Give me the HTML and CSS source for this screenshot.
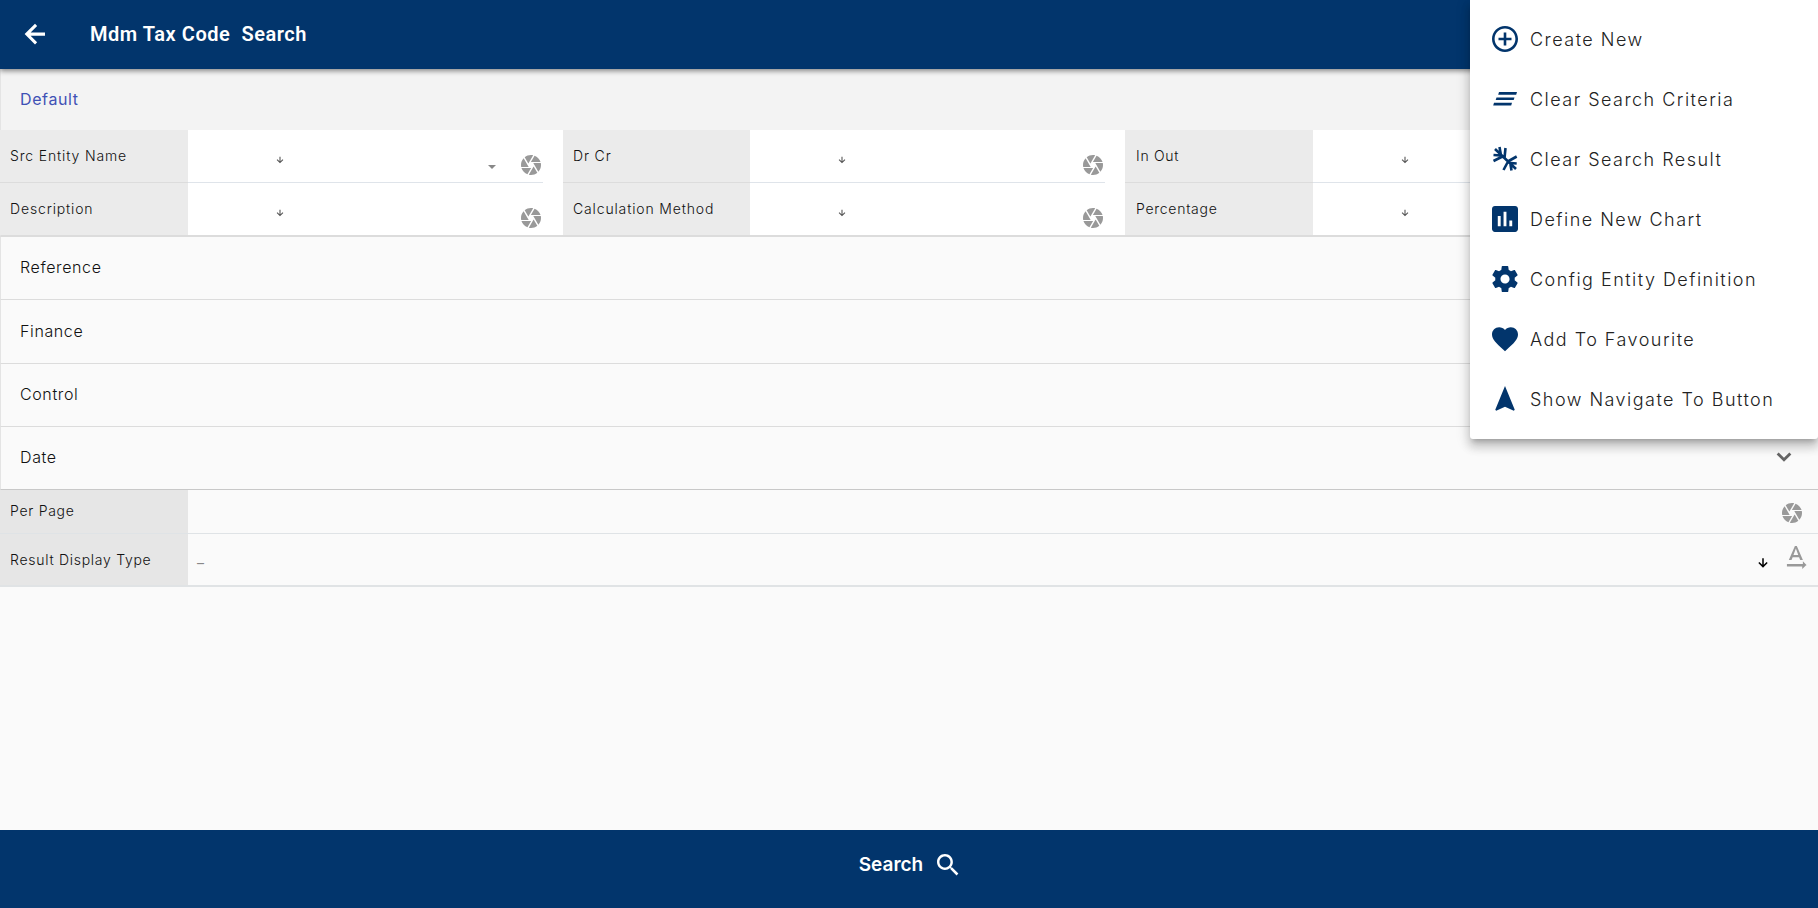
FILE: index.html
```html
<!DOCTYPE html>
<html lang="en">
<head>
<meta charset="utf-8">
<title>Mdm Tax Code Search</title>
<link rel="stylesheet" href="styles.css">
</head>
<body>
<svg class="defs" width="0" height="0" aria-hidden="true">
  <symbol id="shutter" viewBox="2 2 20 20"><path d="M9.4 10.5l4.77-8.26C13.47 2.09 12.75 2 12 2c-2.4 0-4.6.85-6.32 2.25l3.66 6.35.06-.1zM21.54 9c-.92-2.92-3.15-5.26-6-6.34L11.88 9h9.66zm.26 1h-7.49l.29.5 4.76 8.25C21 16.97 22 14.61 22 12c0-.69-.07-1.35-.2-2zM8.54 12l-3.9-6.75C3.01 7.03 2 9.39 2 12c0 .69.07 1.35.2 2h7.49l-1.15-2zm-6.08 3c.92 2.92 3.15 5.26 6 6.34L12.12 15H2.46zm11.27 0l-3.9 6.76c.7.15 1.42.24 2.17.24 2.4 0 4.6-.85 6.32-2.25l-3.66-6.35-.93 1.6z"/></symbol>
  <symbol id="down" viewBox="0 0 24 24"><path d="M20 12l-1.8-1.8L13.3 15V4h-2.6v11l-4.9-4.800L4 12l8 8z"/></symbol>
  <symbol id="chev" viewBox="0 0 24 24"><path d="M16.590 8.090L12 12.670 7.410 8.090 5.700 9.800l6.300 6.300 6.300-6.300z"/></symbol>
</svg>

<header class="topbar">
  <svg class="back" viewBox="0 0 24 24"><path d="M20 10.700H8.500l5.200-5.200L12 3.700 3.700 12l8.300 8.300 1.700-1.800-5.200-5.200H20z"/></svg>
  <h1 class="title">Mdm Tax Code  Search</h1>
</header>

<main class="content">
  <section class="main-panel">
    <div class="tab-row"><span class="tab">Default</span></div>
    <div class="criteria">
      <div class="cell"><div class="label">Src Entity Name</div><div class="value underlined"><svg class="arrow"><use href="#down"/></svg><span class="caret"></span><svg class="shutter"><use href="#shutter"/></svg></div></div>
      <div class="cell"><div class="label">Dr Cr</div><div class="value underlined"><svg class="arrow"><use href="#down"/></svg><svg class="shutter"><use href="#shutter"/></svg></div></div>
      <div class="cell"><div class="label">In Out</div><div class="value underlined"><svg class="arrow"><use href="#down"/></svg><svg class="shutter"><use href="#shutter"/></svg></div></div>
      <div class="cell"><div class="label">Description</div><div class="value"><svg class="arrow"><use href="#down"/></svg><svg class="shutter"><use href="#shutter"/></svg></div></div>
      <div class="cell"><div class="label">Calculation Method</div><div class="value"><svg class="arrow"><use href="#down"/></svg><svg class="shutter"><use href="#shutter"/></svg></div></div>
      <div class="cell"><div class="label">Percentage</div><div class="value"><svg class="arrow"><use href="#down"/></svg><svg class="shutter"><use href="#shutter"/></svg></div></div>
    </div>
  </section>

  <div class="accordion first"><span>Reference</span></div>
  <div class="accordion second"><span>Finance</span></div>
  <div class="accordion"><span>Control</span></div>
  <div class="accordion last"><span>Date</span><svg class="chevron"><use href="#chev"/></svg></div>

  <div class="option-row per-page">
    <div class="option-label">Per Page</div>
    <div class="option-value"><svg class="shutter"><use href="#shutter"/></svg></div>
  </div>
  <div class="option-row display-type">
    <div class="option-label">Result Display Type</div>
    <div class="option-value">
      <span class="dash">–</span>
      <svg class="arrow-dark"><use href="#down"/></svg>
      <svg class="text-dir" viewBox="5 3 15 18"><path d="M12.75 3h-1.5L6.5 14h2.1l.9-2.2h5l.9 2.2h2.1L12.75 3zm-2.62 7L12 4.98 13.87 10h-3.74zm10.37 8l-3-3v2H5v2h12v2l3-3z"/></svg>
    </div>
  </div>
</main>

<footer class="bottombar">
  <span class="search-label">Search</span>
  <svg class="search-icon" viewBox="3 3 18 18"><path d="M15.5 14h-.79l-.28-.27C15.41 12.59 16 11.11 16 9.5 16 5.91 13.09 3 9.5 3S3 5.91 3 9.5 5.91 16 9.5 16c1.61 0 3.09-.59 4.23-1.57l.27.28v.79l5 4.99L20.49 19l-4.99-5zm-6 0C7.01 14 5 11.99 5 9.5S7.01 5 9.5 5 14 7.01 14 9.5 11.99 14 9.5 14z"/></svg>
</footer>

<nav class="menu">
  <a class="menu-item"><svg class="menu-icon" viewBox="2 2 20 20"><path d="M13 7h-2v4H7v2h4v4h2v-4h4v-2h-4V7zm-1-5C6.48 2 2 6.48 2 12s4.48 10 10 10 10-4.48 10-10S17.52 2 12 2zm0 18c-4.41 0-8-3.59-8-8s3.59-8 8-8 8 3.59 8 8-3.59 8-8 8z"/></svg><span>Create New</span></a>
  <a class="menu-item"><svg class="menu-icon" viewBox="0 0 26 26"><path d="M7 6h18l-.8 2.700H6.200zM4.500 11.400h18l-.8 2.700H3.700zM2 16.700h18l-.8 2.700H1.200z"/></svg><span>Clear Search Criteria</span></a>
  <a class="menu-item"><svg class="menu-icon strokes" viewBox="0 0 26 26"><path d="M3 3L24 23M7.500 1l1.500 8.500M1.500 9l7.500.5M13.500 2l-1 10M1.500 15l9-4.500M24.700 10.500l-8 4.500M24.700 17.500l-6 -.5M11.500 24l4-7.500M19.500 24.500l-1-6"/></svg><span>Clear Search Result</span></a>
  <a class="menu-item"><svg class="menu-icon" viewBox="3 3 18 18"><path d="M19 3H5c-1.100 0-2 .9-2 2v14c0 1.100.9 2 2 2h14c1.100 0 2-.9 2-2V5c0-1.100-.9-2-2-2zM9 17H7v-7h2v7zm4 0h-2V7h2v10zm4 0h-2v-4h2v4z"/></svg><span>Define New Chart</span></a>
  <a class="menu-item"><svg class="menu-icon" viewBox="2.500 2 19 20"><path d="M19.430 12.980c.04-.32.07-.64.07-.98s-.03-.66-.07-.98l2.110-1.650c.19-.15.24-.42.12-.64l-2-3.460c-.12-.22-.39-.3-.61-.22l-2.490 1c-.52-.4-1.080-.73-1.690-.98l-.38-2.650C14.460 2.180 14.250 2 14 2h-4c-.25 0-.46.18-.49.42l-.38 2.650c-.61.25-1.170.59-1.690.98l-2.490-1c-.23-.09-.49 0-.61.22l-2 3.460c-.13.22-.07.49.12.64l2.110 1.650c-.04.32-.07.65-.07.98s.03.66.07.98l-2.110 1.650c-.19.15-.24.42-.12.64l2 3.460c.12.22.39.3.61.22l2.490-1c.52.4 1.080.73 1.690.98l.38 2.650c.03.24.24.42.49.42h4c.25 0 .46-.18.49-.42l.38-2.650c.61-.25 1.170-.59 1.690-.98l2.490 1c.23.09.49 0 .61-.22l2-3.460c.12-.22.07-.49-.12-.64l-2.110-1.650zM12 15.500c-1.930 0-3.500-1.570-3.500-3.500s1.570-3.500 3.500-3.500 3.500 1.570 3.500 3.500-1.570 3.500-3.500 3.500z"/></svg><span>Config Entity Definition</span></a>
  <a class="menu-item"><svg class="menu-icon" viewBox="2 2 20 20"><path d="M12 21.350l-1.450-1.320C5.400 15.360 2 12.280 2 8.500 2 5.420 4.420 3 7.500 3c1.740 0 3.410.81 4.500 2.090C13.090 3.810 14.760 3 16.500 3 19.580 3 22 5.420 22 8.500c0 3.780-3.400 6.860-8.550 11.540L12 21.350z"/></svg><span>Add To Favourite</span></a>
  <a class="menu-item"><svg class="menu-icon" viewBox="2 2 20 20"><path d="M12 2L4.500 20.290l.71.71L12 18l6.790 3 .71-.71z"/></svg><span>Show Navigate To Button</span></a>
</nav>
</body>
</html>
```
FILE: styles.css
```css
* { box-sizing: border-box; }
html, body { margin: 0; height: 100%; }
body {
  display: flex;
  flex-direction: column;
  height: 908px;
  overflow: hidden;
  background: #fafafa;
  font-family: "Inter", "Liberation Sans", sans-serif;
  color: #333;
  position: relative;
}
.defs { position: absolute; }

.topbar {
  height: 69px;
  flex: none;
  background: #02356c;
  display: flex;
  align-items: center;
  padding-left: 20px;
  box-shadow: 0 2px 5px rgba(0,0,0,.45);
  position: relative;
  z-index: 2;
}
.back { width: 30px; height: 30px; fill: #fff; margin-top: -2px; }
.title {
  margin: -2px 0 0 40px;
  font-size: 20px;
  font-weight: 600;
  color: #fff;
  white-space: pre;
  font-family: "Roboto", sans-serif;
  letter-spacing: .55px;
}

.content { flex: 1; display: flex; flex-direction: column; min-height: 0; }

.main-panel { background: #f3f3f3; border-left: 1px solid #e4e4e4; border-bottom: 2px solid #dcdcdc; height: 168px; flex: none; }
.tab-row { height: 60px; display: flex; align-items: center; padding-left: 19px; margin-bottom: 1px; }
.tab { font-size: 16px; font-weight: 400; color: #3f51b5; letter-spacing: .62px; }

.criteria {
  display: grid;
  grid-template-columns: 563px 562px 692px;
  grid-template-rows: 53px 52px;
  margin-left: -1px;
}
.cell { display: flex; min-width: 0; }
.label {
  width: 188px;
  flex: none;
  background: #ebebeb;
  border-bottom: 1px solid #dcdcdc;
  font-size: 14px;
  font-weight: 300;
  letter-spacing: .85px;
  padding: 17px 0 0 10px;
  color: #111;
  white-space: nowrap;
}
.cell:nth-child(n+4) .label { border-bottom: 0; }
.cell:nth-child(3) .label, .cell:nth-child(6) .label { padding-left: 11px; letter-spacing: .72px; }
.cell:nth-child(2) .label, .cell:nth-child(5) .label { width: 187px; }
.value { flex: 1; background: #fff; position: relative; }
.underlined::after {
  content: "";
  position: absolute;
  left: 0; right: 20px; bottom: 0;
  border-bottom: 1px solid #dfe4ea;
}
.arrow {
  position: absolute;
  left: 87px; top: 25px;
  width: 10px; height: 10px;
  fill: #555;
}
.caret {
  position: absolute;
  left: 300px; top: 35px;
  border: 4px solid transparent;
  border-top: 4px solid #888;
  border-bottom: 0;
}
.shutter { width: 20px; height: 20px; fill: #999; }
.value .shutter { position: absolute; left: 333px; top: 25px; }

.accordion {
  height: 63px;
  flex: none;
  display: flex;
  align-items: center;
  justify-content: space-between;
  padding: 0 19px 2px;
  font-size: 16px;
  font-weight: 300;
  letter-spacing: .62px;
  color: #111;
  border-left: 1px solid #e4e4e4;
  border-bottom: 1px solid #dcdcdc;
  background: #fafafa;
}
.accordion.first { padding-bottom: 3px; }
.accordion.second { height: 64px; padding-bottom: 2px; }
.accordion.last { border-bottom-color: #c8c8c8; }
.chevron { width: 28px; height: 28px; fill: #666; margin-right: 1px; }

.option-row { display: flex; flex: none; border-bottom: 1px solid #dfe3e6; }
.per-page { height: 44px; }
.display-type { border-bottom: 2px solid #e0e3e5; height: 53px; }
.option-label {
  width: 188px;
  flex: none;
  background: #e6e6e6;
  font-size: 14px;
  font-weight: 300;
  letter-spacing: .72px;
  color: #111;
  display: flex;
  align-items: center;
  padding-left: 10px;
}
.per-page .option-label { padding-bottom: 2px; }
.option-value { flex: 1; display: flex; align-items: center; justify-content: flex-end; padding-right: 17px; position: relative; }
.dash { position: absolute; left: 9px; top: 20px; font-size: 14px; color: #888; }
.arrow-dark { width: 14px; height: 14px; fill: #000; margin-right: 16px; margin-top: 6px; }
.text-dir { width: 21px; height: 23px; fill: #999; margin-right: -6px; margin-top: -4px; }

.per-page .shutter { margin-right: -1px; margin-top: 2px; }

.bottombar {
  height: 78px;
  flex: none;
  margin-top: auto;
  padding-bottom: 9px;
  background: #02356c;
  display: flex;
  align-items: center;
  justify-content: center;
  gap: 14px;
  color: #fff;
}
.search-label { font-family: "Inter", sans-serif; font-size: 19px; font-weight: 600; }
.search-icon { width: 22px; height: 22px; fill: #fff; }

.menu {
  position: absolute;
  top: 0; right: 0;
  width: 348px;
  height: 439px;
  background: #fff;
  padding-top: 9px;
  z-index: 5;
  border-radius: 0 0 3px 3px;
  box-shadow: 0 5px 5px -3px rgba(0,0,0,.2), 0 8px 10px 1px rgba(0,0,0,.14), 0 3px 14px 2px rgba(0,0,0,.12);
}
.menu-item {
  height: 60px;
  display: flex;
  align-items: center;
  gap: 13px;
  padding-left: 22px;
  font-size: 18px;
  font-weight: 300;
  letter-spacing: 1.47px;
  color: #222;
}
.menu-item span { margin-left: -1px; }
.menu-icon { width: 26px; height: 26px; fill: #02356c; flex: none; }
.menu-icon.strokes { fill: none; stroke: #02356c; stroke-width: 2.600; }
```
